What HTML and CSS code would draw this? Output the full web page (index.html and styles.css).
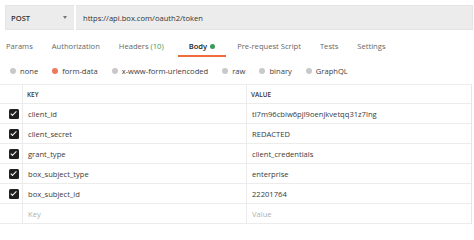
FILE: index.html
```html
<!DOCTYPE html>
<html>
<head>
<meta charset="utf-8">
<link rel="stylesheet" href="styles.css">
</head>
<body>
<div class="urlbar">
  <div class="method"><span>POST</span><span class="caret"></span></div>
  <div class="url">https://api.box.com/oauth2/token</div>
</div>
<div class="tabs">
  <div class="tab">Params</div>
  <div class="tab">Authorization</div>
  <div class="tab">Headers <span class="count">(10)</span></div>
  <div class="tab active">Body <span class="dot"></span></div>
  <div class="tab">Pre-request Script</div>
  <div class="tab">Tests</div>
  <div class="tab">Settings</div>
</div>
<div class="modes">
  <div class="mode"><span class="radio"></span>none</div>
  <div class="mode"><span class="radio on"></span>form-data</div>
  <div class="mode"><span class="radio"></span>x-www-form-urlencoded</div>
  <div class="mode"><span class="radio"></span>raw</div>
  <div class="mode"><span class="radio"></span>binary</div>
  <div class="mode"><span class="radio"></span>GraphQL</div>
</div>
<div class="table">
  <div class="row head">
    <div class="c0"></div>
    <div class="c1">KEY</div>
    <div class="c2">VALUE</div>
  </div>
  <div class="row">
    <div class="c0"><span class="cb"></span></div>
    <div class="c1">client_id</div>
    <div class="c2">tl7m96cbiw6pjl9oenjkvetqq31z7lng</div>
  </div>
  <div class="row">
    <div class="c0"><span class="cb"></span></div>
    <div class="c1">client_secret</div>
    <div class="c2">REDACTED</div>
  </div>
  <div class="row">
    <div class="c0"><span class="cb"></span></div>
    <div class="c1">grant_type</div>
    <div class="c2">client_credentials</div>
  </div>
  <div class="row">
    <div class="c0"><span class="cb"></span></div>
    <div class="c1">box_subject_type</div>
    <div class="c2">enterprise</div>
  </div>
  <div class="row">
    <div class="c0"><span class="cb"></span></div>
    <div class="c1">box_subject_id</div>
    <div class="c2">22201764</div>
  </div>
  <div class="row ph">
    <div class="c0"></div>
    <div class="c1">Key</div>
    <div class="c2">Value</div>
  </div>
</div>
</body>
</html>
```
FILE: styles.css
```css
* { box-sizing: border-box; }
html, body { margin: 0; padding: 0; background: #fff; }
body {
  font-family: "Open Sans", "Noto Sans", sans-serif;
  font-size: 7.6px;
  color: #3a3a3a;
  width: 474px;
  height: 231px;
  overflow: hidden;
}
.urlbar {
  display: flex;
  height: 25px;
  margin: 5px 1px 0 5px;
  gap: 2px;
  background: #fff;
}
.method {
  width: 69px;
  background: #ececec;
  border: 1px solid #e4e4e4;
  border-right: none;
  display: flex;
  align-items: center;
  justify-content: space-between;
  padding: 0 7px 0 5px;
  font-weight: 600;
  color: #333;
}
.caret {
  width: 0; height: 0;
  border-left: 2.5px solid transparent;
  border-right: 2.5px solid transparent;
  border-top: 3px solid #777;
}
.url {
  flex: 1;
  background: #ececec;
  border: 1px solid #e4e4e4;
  border-left: none;
  display: flex;
  align-items: center;
  padding-left: 7px;
  color: #333;
}
.tabs {
  display: flex;
  height: 20px;
  margin-top: 7px;
  padding-left: 6px;
  color: #666;
}
.tab {
  display: flex;
  align-items: center;
  margin-right: 19px;
  border-bottom: 2px solid transparent;
  white-space: nowrap;
}
.tab:nth-child(3) { margin-right: 14px; }
.tab.active {
  color: #222;
  font-weight: 600;
  padding: 0 11px;
  border-bottom-color: #f26b3a;
  margin-right: 11px;
}
.count { color: #3f9a52; margin-left: 2px; }
.dot {
  width: 5px; height: 5px;
  border-radius: 50%;
  background: #3c9a5a;
  margin-left: 3px;
}
.modes {
  display: flex;
  align-items: center;
  height: 27px;
  padding-left: 10px;
  gap: 14px;
  color: #3c3c3c;
}
.mode { display: flex; align-items: center; white-space: nowrap; }
.radio {
  width: 6px; height: 6px;
  border-radius: 50%;
  background: #c9c9c9;
  margin-right: 4px;
}
.radio.on { background: #ec7a5e; }
.table {
  margin: 0 2px 0 0;
  border-top: 1px solid #ececec;
  border-right: 1px solid #e6e6e6;
}
.row {
  display: grid;
  grid-template-columns: 22px 224px 1fr;
  height: 20px;
  border-bottom: 1px solid #ececec;
}
.row.head { height: 19px; }
.row > div { display: flex; align-items: center; }
.c1 { border-left: 1px solid #ececec; padding-left: 5px; }
.c2 { border-left: 1px solid #ececec; padding-left: 5px; }
.head .c1, .head .c2 {
  font-size: 6.4px;
  font-weight: 600;
  color: #333;
  padding-left: 4px;
}
.c0 { justify-content: flex-end; padding-right: 3px; }
.cb {
  width: 10px; height: 10px;
  border-radius: 1.5px;
  background: #1f1f1f;
  position: relative;
}
.cb::after {
  content: "";
  position: absolute;
  left: 3.4px; top: 1.2px;
  width: 2.4px; height: 5px;
  border: solid #fff;
  border-width: 0 1.5px 1.5px 0;
  transform: rotate(45deg);
}
.ph .c1, .ph .c2 { color: #b0b0b0; }
```
